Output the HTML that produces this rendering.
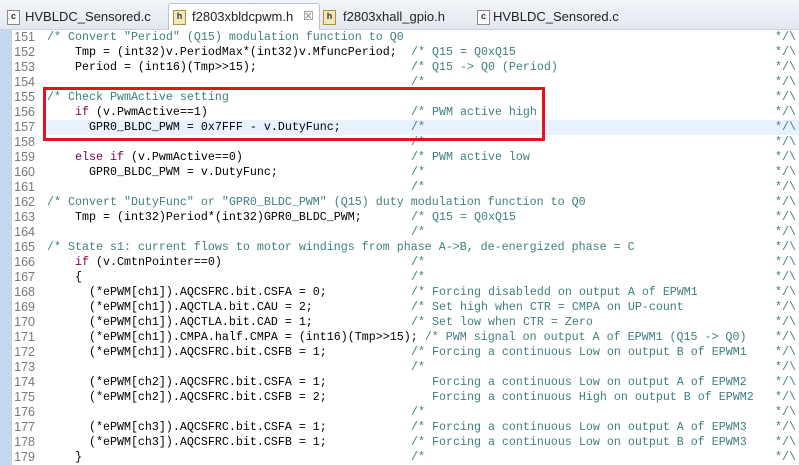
<!DOCTYPE html>
<html><head><meta charset="utf-8"><style>
body{margin:0;width:799px;height:465px;overflow:hidden;background:#fff;position:relative;font-family:"Liberation Sans",sans-serif}
#tabs{position:absolute;left:0;top:0;width:799px;height:29px;background:linear-gradient(#f3f5f9,#e3e8f0);border-bottom:1px solid #c9d2de}
.tab{position:absolute;top:4px;height:25px;font-size:13px;color:#222;line-height:25px}
.tab.act{background:#fff;border:1px solid #b8c3d2;border-bottom:none;height:26px;top:3px;border-radius:3px 3px 0 0}
.ic{position:absolute;top:6px;width:11px;height:13px;border:1px solid #8a8a8a;background:#fafafa;font-size:9px;line-height:11px;text-align:center;font-weight:bold;color:#333}
.ic.h{background:#f3e7b8;border-color:#b09040}
#gut{position:absolute;left:0;top:30px;width:12px;height:435px;background-color:#dce8f8;background-image:radial-gradient(#7aa3dc 45%,transparent 50%);background-size:2px 2px}
#code{position:absolute;left:0;top:30px;width:799px;font-family:"Liberation Mono",monospace;font-size:11.667px}
.l{position:relative;height:15px;line-height:15px;width:799px;overflow:hidden}
.l span{white-space:pre}
.n{position:absolute;left:0;top:0;width:35px;text-align:right;color:#787878;font-family:"Liberation Sans",sans-serif;font-size:12.5px}
.c{position:absolute;left:47px;top:0;color:#000}
.m{position:absolute;left:411px;top:0;color:#3f7f7f}
.e{position:absolute;left:775px;top:0;color:#3f7f7f}
.c .g,.g{color:#3f7f7f}
.k{color:#7f0055}
.hl::before{content:"";position:absolute;left:47px;top:0;width:752px;height:15px;background:#e8f2fe}
</style></head><body>
<div id="tabs">
<div class="tab" style="left:0;width:166px"><span class="ic" style="left:7px">c</span><span style="position:absolute;left:25px">HVBLDC_Sensored.c</span></div>
<div class="tab act" style="left:168px;width:150px"><span class="ic h" style="left:4px">h</span><span style="position:absolute;left:23px">f2803xbldcpwm.h</span><span style="position:absolute;left:134px;color:#777;font-size:12px">☒</span></div>
<div class="tab" style="left:320px;width:150px"><span class="ic h" style="left:3px">h</span><span style="position:absolute;left:23px">f2803xhall_gpio.h</span></div>
<div class="tab" style="left:472px;width:150px"><span class="ic" style="left:5px">c</span><span style="position:absolute;left:21px">HVBLDC_Sensored.c</span></div>
</div>
<div id="gut"></div>
<div id="code"><div class="l"><span class="n">151</span><span class="c g">/* Convert "Period" (Q15) modulation function to Q0</span><span class="e">*/\</span></div><div class="l"><span class="n">152</span><span class="c">    Tmp = (int32)v.PeriodMax*(int32)v.MfuncPeriod;</span><span class="m">/* Q15 = Q0xQ15</span><span class="e">*/\</span></div><div class="l"><span class="n">153</span><span class="c">    Period = (int16)(Tmp&gt;&gt;15);</span><span class="m">/* Q15 -&gt; Q0 (Period)</span><span class="e">*/\</span></div><div class="l"><span class="n">154</span><span class="m">/*</span><span class="e">*/\</span></div><div class="l"><span class="n">155</span><span class="c g">/* Check PwmActive setting</span><span class="e">*/\</span></div><div class="l"><span class="n">156</span><span class="c">    <span class="k">if</span> (v.PwmActive==1)</span><span class="m">/* PWM active high</span><span class="e">*/\</span></div><div class="l hl"><span class="n">157</span><span class="c">      GPR0_BLDC_PWM = 0x7FFF - v.DutyFunc;</span><span class="m">/*</span><span class="e">*/\</span></div><div class="l"><span class="n">158</span><span class="m">/*</span><span class="e">*/\</span></div><div class="l"><span class="n">159</span><span class="c">    <span class="k">else if</span> (v.PwmActive==0)</span><span class="m">/* PWM active low</span><span class="e">*/\</span></div><div class="l"><span class="n">160</span><span class="c">      GPR0_BLDC_PWM = v.DutyFunc;</span><span class="m">/*</span><span class="e">*/\</span></div><div class="l"><span class="n">161</span><span class="m">/*</span><span class="e">*/\</span></div><div class="l"><span class="n">162</span><span class="c g">/* Convert "DutyFunc" or "GPR0_BLDC_PWM" (Q15) duty modulation function to Q0</span><span class="e">*/\</span></div><div class="l"><span class="n">163</span><span class="c">    Tmp = (int32)Period*(int32)GPR0_BLDC_PWM;</span><span class="m">/* Q15 = Q0xQ15</span><span class="e">*/\</span></div><div class="l"><span class="n">164</span><span class="m">/*</span><span class="e">*/\</span></div><div class="l"><span class="n">165</span><span class="c g">/* State s1: current flows to motor windings from phase A-&gt;B, de-energized phase = C</span><span class="e">*/\</span></div><div class="l"><span class="n">166</span><span class="c">    <span class="k">if</span> (v.CmtnPointer==0)</span><span class="m">/*</span><span class="e">*/\</span></div><div class="l"><span class="n">167</span><span class="c">    {</span><span class="m">/*</span><span class="e">*/\</span></div><div class="l"><span class="n">168</span><span class="c">      (*ePWM[ch1]).AQCSFRC.bit.CSFA = 0;</span><span class="m">/* Forcing disabledd on output A of EPWM1</span><span class="e">*/\</span></div><div class="l"><span class="n">169</span><span class="c">      (*ePWM[ch1]).AQCTLA.bit.CAU = 2;</span><span class="m">/* Set high when CTR = CMPA on UP-count</span><span class="e">*/\</span></div><div class="l"><span class="n">170</span><span class="c">      (*ePWM[ch1]).AQCTLA.bit.CAD = 1;</span><span class="m">/* Set low when CTR = Zero</span><span class="e">*/\</span></div><div class="l"><span class="n">171</span><span class="c">      (*ePWM[ch1]).CMPA.half.CMPA = (int16)(Tmp&gt;&gt;15); <span class="g">/* PWM signal on output A of EPWM1 (Q15 -&gt; Q0)</span></span><span class="e">*/\</span></div><div class="l"><span class="n">172</span><span class="c">      (*ePWM[ch1]).AQCSFRC.bit.CSFB = 1;</span><span class="m">/* Forcing a continuous Low on output B of EPWM1</span><span class="e">*/\</span></div><div class="l"><span class="n">173</span><span class="m">/*</span><span class="e">*/\</span></div><div class="l"><span class="n">174</span><span class="c">      (*ePWM[ch2]).AQCSFRC.bit.CSFA = 1;</span><span class="m">   Forcing a continuous Low on output A of EPWM2</span><span class="e">*/\</span></div><div class="l"><span class="n">175</span><span class="c">      (*ePWM[ch2]).AQCSFRC.bit.CSFB = 2;</span><span class="m">   Forcing a continuous High on output B of EPWM2</span><span class="e">*/\</span></div><div class="l"><span class="n">176</span><span class="m">/*</span><span class="e">*/\</span></div><div class="l"><span class="n">177</span><span class="c">      (*ePWM[ch3]).AQCSFRC.bit.CSFA = 1;</span><span class="m">/* Forcing a continuous Low on output A of EPWM3</span><span class="e">*/\</span></div><div class="l"><span class="n">178</span><span class="c">      (*ePWM[ch3]).AQCSFRC.bit.CSFB = 1;</span><span class="m">/* Forcing a continuous Low on output B of EPWM3</span><span class="e">*/\</span></div><div class="l"><span class="n">179</span><span class="c">    }</span><span class="m">/*</span><span class="e">*/\</span></div></div>
<div style="position:absolute;left:43px;top:87px;width:496px;height:48px;border:3px solid #e8101c"></div>
</body></html>
